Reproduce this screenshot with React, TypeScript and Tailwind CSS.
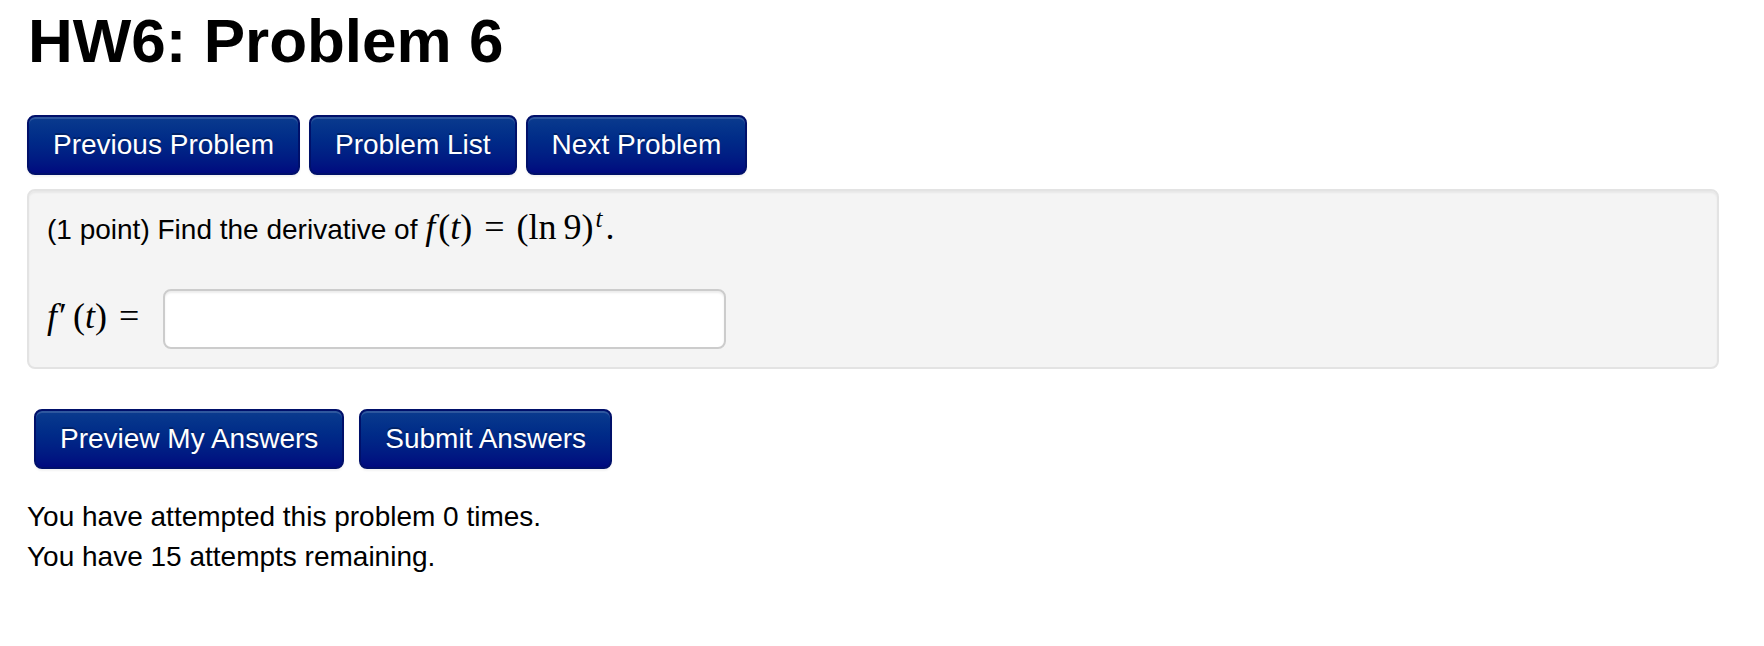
import React from "react";

const btn =
  "inline-block h-[60px] px-[24px] rounded-[8px] border-2 border-[#00106a] bg-linear-to-b from-[#0b3b8e] to-[#00097f] text-white text-[28px] leading-[40px] shadow-[inset_0_2px_0_rgba(255,255,255,0.15),0_2px_2px_rgba(0,0,0,0.05)] [text-shadow:0_-2px_0_rgba(0,0,0,0.25)]";

function Math({ children }: { children: React.ReactNode }) {
  return <span className="font-['Liberation_Serif',serif] text-[36px] leading-[24px]">{children}</span>;
}

export default function App() {
  return (
    <div className="min-h-[646px] bg-white pl-[27px] pr-[45px] font-['Liberation_Sans',Arial,sans-serif] text-black">
      <h2 className="pt-[1px] pl-[1px] text-[62px] leading-[80px] font-bold">HW6: Problem 6</h2>

      <div className="mt-[34px] flex gap-[9px]">
        <button className={btn}>Previous Problem</button>
        <button className={btn}>Problem List</button>
        <button className={btn}>Next Problem</button>
      </div>

      <div className="mt-[14px] rounded-[8px] border-2 border-[#e3e3e3] bg-[#f4f4f4] px-[18px] pt-[19px] pb-[18px] shadow-[inset_0_2px_2px_rgba(0,0,0,0.05)]">
        <p className="h-[40px] text-[28px] leading-[40px]">
          (1 point) Find the derivative of{" "}
          <Math>
            <i className="mr-[3px]">f</i>(<i>t</i>)<span className="mx-[12px]">=</span>(ln<span className="ml-[7px]">9</span>)
            <sup className="ml-[2px] text-[25px]"><i>t</i></sup>
            <span className="ml-[3px]">.</span>
          </Math>
        </p>
        <div className="mt-[39px] flex items-center">
          <span className="w-[116px] text-[28px] leading-[40px]">
            <Math>
              <i className="mr-[2px]">f</i>′<span className="ml-[6px]">(</span><i>t</i>)<span className="ml-[12px]">=</span>
            </Math>
          </span>
          <input
            type="text"
            className="h-[60px] w-[563px] rounded-[8px] border-2 border-[#cccccc] bg-white px-[12px] text-[28px] shadow-[inset_0_2px_2px_rgba(0,0,0,0.075)] outline-none"
          />
        </div>
      </div>

      <div className="mt-[40px] flex gap-[15px] pl-[7px]">
        <button className={btn}>Preview My Answers</button>
        <button className={btn}>Submit Answers</button>
      </div>

      <div className="mt-[28px] text-[28px] leading-[40px]">
        <p>You have attempted this problem 0 times.</p>
        <p>You have 15 attempts remaining.</p>
      </div>
    </div>
  );
}
